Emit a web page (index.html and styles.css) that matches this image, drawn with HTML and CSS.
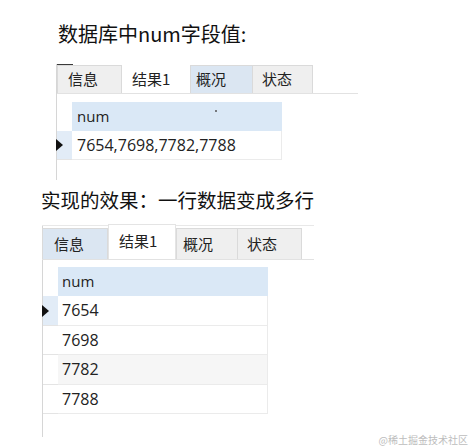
FILE: index.html
```html
<!DOCTYPE html>
<html lang="zh">
<head>
<meta charset="utf-8">
<link rel="stylesheet" href="styles.css">
</head>
<body>
<div class="page">
  <div class="title title1">数据库中num字段值:</div>
  <div class="panel panel1">
    <div class="mark"></div>
    <div class="tabs tabs1">
      <div class="tab t-info gray">信息</div>
      <div class="tab t-res active">结果1</div>
      <div class="tab t-sum blue">概况</div>
      <div class="tab t-state gray">状态</div>
    </div>
    <div class="grid">
      <div class="ind"></div>
      <div class="head">num<span class="dot"></span></div>
      <div class="ind sel"><span class="arrow"></span></div>
      <div class="cell">7654,7698,7782,7788</div>
    </div>
  </div>

  <div class="title title2">实现的效果：一行数据变成多行</div>
  <div class="panel panel2">
    <div class="tabs tabs2">
      <div class="tab u-info blue">信息</div>
      <div class="tab u-res active">结果1</div>
      <div class="tab u-sum gray">概况</div>
      <div class="tab u-state gray">状态</div>
    </div>
    <div class="grid grid2">
      <div class="ind"></div>
      <div class="head">num</div>
      <div class="ind sel"><span class="arrow"></span></div>
      <div class="cell">7654</div>
      <div class="ind"></div>
      <div class="cell">7698</div>
      <div class="ind"></div>
      <div class="cell alt">7782</div>
      <div class="ind"></div>
      <div class="cell">7788</div>
    </div>
  </div>
  <div class="watermark">@稀土掘金技术社区</div>
</div>
</body>
</html>
```

FILE: styles.css
```css
html, body {
  margin: 0;
  padding: 0;
  background: #ffffff;
}

.page {
  position: relative;
  width: 474px;
  height: 448px;
  overflow: hidden;
  font-family: "Noto Sans CJK SC", "Noto Sans", sans-serif;
  color: #1a1a1a;
}

.title {
  font-size: 20px;
  line-height: 28px;
  color: #111;
  white-space: nowrap;
}

.title1 {
  padding-top: 20px;
  margin-left: 58px;
}

.title2 {
  margin-top: 6px;
  margin-left: 41px;
  font-size: 19.5px;
}

.panel {
  box-sizing: border-box;
  border-left: 1px solid #d6d6d6;
}

.panel1 {
  margin-top: 16px;
  margin-left: 56px;
  width: 302px;
  height: 116px;
}

.mark {
  width: 16px;
  height: 1px;
  background: #3a3a3a;
}

.tabs {
  display: flex;
  box-sizing: border-box;
  border-bottom: 1px solid #e2e2e2;
}

.tabs1 {
  height: 29px;
  align-items: stretch;
}

.tab {
  box-sizing: border-box;
  font-size: 15px;
  line-height: 26px;
  color: #222;
  white-space: nowrap;
  border: 1px solid #dadada;
  border-bottom: none;
}

.gray { background: #efefef; }
.blue { background: #dbe6f2; }
.active { background: #ffffff; border-color: transparent; }

.t-info { width: 65px; padding-left: 10px; }
.t-res { width: 60px; padding-left: 9px; }
.t-sum { width: 63px; padding-left: 5px; margin-left: 8px; }
.t-state { width: 60px; padding-left: 9px; border-left: none; }

.grid {
  display: grid;
  grid-template-columns: 15px 210px;
  grid-auto-rows: 29px;
  margin-top: 8px;
  font-family: "Open Sans", "Noto Sans", sans-serif;
}

.ind {
  box-sizing: border-box;
  border-bottom: 1px solid #e4e4e4;
  display: flex;
  align-items: center;
}

.ind.sel {
  background: #e2ecf7;
}

.grid > .ind:first-child {
  border-bottom: none;
}

.arrow {
  width: 0;
  height: 0;
  border-left: 7px solid #111;
  border-top: 6px solid transparent;
  border-bottom: 6px solid transparent;
  margin-left: -1px;
}

.head {
  position: relative;
  box-sizing: border-box;
  background: #dae8f6;
  font-size: 15px;
  line-height: 29px;
  padding-left: 5px;
  color: #222;
}

.dot {
  position: absolute;
  left: 143px;
  top: 8px;
  width: 2px;
  height: 2px;
  background: #555;
  border-radius: 1px;
}

.cell {
  box-sizing: border-box;
  font-size: 16px;
  line-height: 28px;
  padding-left: 5px;
  color: #222;
  border-right: 1px solid #ebebeb;
  border-bottom: 1px solid #ebebeb;
  background: #fff;
}

.cell.alt {
  background: #f6f6f6;
}

.panel2 {
  margin-top: 11px;
  margin-left: 42px;
  width: 272px;
  height: 212px;
}

.tabs2 {
  height: 35px;
  align-items: flex-end;
  border-top: 1px solid #e8e8e8;
  margin-left: -1px;
}

.tabs2 .tab {
  height: 31px;
  line-height: 29px;
}

.tabs2 .tab.active {
  height: 35px;
  line-height: 31px;
  border: 1px solid #e4e4e4;
  border-bottom: none;
  margin-top: -1px;
}

.u-info { width: 66px; padding-left: 11px; }
.u-res { width: 68px; padding-left: 10px; }
.u-sum { width: 62px; padding-left: 6px; }
.u-state { width: 64px; padding-left: 9px; border-left: none; }

.grid2 {
  margin-top: 7px;
  grid-auto-rows: 29.4px;
}

.grid2 .head {
  line-height: 29px;
  padding-left: 4px;
}

.grid2 .cell {
  padding-left: 4px;
  line-height: 29px;
}

.watermark {
  position: absolute;
  right: 6px;
  bottom: 1px;
  font-size: 10px;
  line-height: 14px;
  color: #bdbdbd;
  white-space: nowrap;
}
```
